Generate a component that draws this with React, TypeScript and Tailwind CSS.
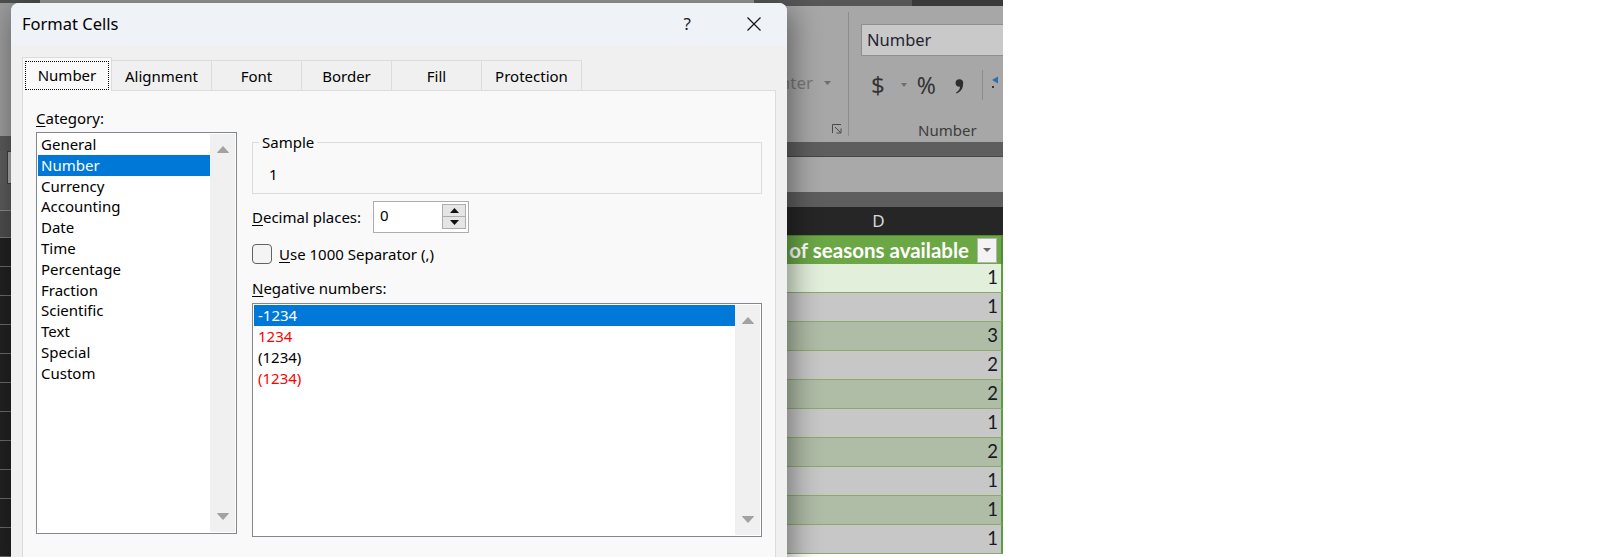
import React from 'react';

const categories = ['General', 'Number', 'Currency', 'Accounting', 'Date', 'Time', 'Percentage', 'Fraction', 'Scientific', 'Text', 'Special', 'Custom'];

const negatives = [
  { label: '-1234', red: false },
  { label: '1234', red: true },
  { label: '(1234)', red: false },
  { label: '(1234)', red: true },
];

const tabs = [
  { label: 'Number', w: 'w-[90px]' },
  { label: 'Alignment', w: 'w-[100px]' },
  { label: 'Font', w: 'w-[90px]' },
  { label: 'Border', w: 'w-[90px]' },
  { label: 'Fill', w: 'w-[90px]' },
  { label: 'Protection', w: 'w-[100px]' },
];

const seasons = [1, 1, 3, 2, 2, 1, 2, 1, 1, 1];

function ScrollArrow({ down }: { down?: boolean }) {
  return (
    <svg width="12" height="7" viewBox="0 0 12 7">
      <polygon points={down ? '0.5,0.5 11.5,0.5 6,6.5' : '0.5,6.5 11.5,6.5 6,0.5'} fill="#a2a2a2" stroke="#a2a2a2" strokeLinejoin="round" />
    </svg>
  );
}

function SpinArrow({ down }: { down?: boolean }) {
  return (
    <svg width="9" height="5" viewBox="0 0 9 5">
      <polygon points={down ? '0,0 9,0 4.5,5' : '0,5 9,5 4.5,0'} fill="#111" />
    </svg>
  );
}

function ScrollBar() {
  return (
    <div className="flex w-[25px] shrink-0 flex-col items-center justify-between bg-[#f0f0f0] py-[12px]">
      <ScrollArrow />
      <ScrollArrow down />
    </div>
  );
}

function LeftStrip() {
  return (
    <div className="flex w-[40px] shrink-0 flex-col">
      <div className="h-[3px] bg-[#4e4e4e]" />
      <div className="h-[139px] bg-[#9b9b9b]" />
      <div className="h-[15px] bg-[#595959]" />
      <div className="flex h-[35px]">
        <div className="w-[7px] bg-[#5c5c5c]" />
        <div className="flex-1 border border-[#3d3d3d] bg-[#a6a6a6]" />
      </div>
      <div className="h-[28px] border-b border-[#8a8a8a] bg-[#5a5a5a]" />
      <div className="h-[28px] border-b border-[#7a7a7a] bg-[#4d4d4d]" />
      {Array.from({ length: 11 }).map((_, i) => (
        <div key={i} className="h-[29px] shrink-0 border-b border-[#6a6a6a] bg-[#212121]" />
      ))}
    </div>
  );
}

function RightColumn() {
  return (
    <div className="flex w-[249px] shrink-0 flex-col font-['Noto_Sans',sans-serif]">
      <div className="flex h-[6px]">
        <div className="w-[158px] bg-[#575757]" />
        <div className="flex-1 bg-[#3a3a3a]" />
      </div>

      {/* ribbon */}
      <div className="flex h-[136px] bg-[#a7a7a7]">
        <div className="flex w-[94px] shrink-0 flex-col">
          <div className="mt-[66px] flex h-[22px] items-center justify-end gap-[11px] pr-[17px]">
            <span className="whitespace-nowrap text-[17px] text-[#777]">Center</span>
            <svg width="7" height="4" viewBox="0 0 7 4">
              <polygon points="0,0 7,0 3.5,4" fill="#6e6e6e" />
            </svg>
          </div>
          <div className="mt-auto flex justify-end pb-[8px] pr-[6px]">
            <svg width="10" height="10" viewBox="0 0 10 10" fill="none" stroke="#4a4a4a" strokeWidth="1">
              <polyline points="0.5,9 0.5,0.5 9,0.5" />
              <line x1="3" y1="3" x2="8.5" y2="8.5" />
              <polyline points="4.5,9 9,9 9,4.5" />
            </svg>
          </div>
        </div>
        <div className="my-[6px] w-px shrink-0 bg-[#8c8c8c]" />
        <div className="flex flex-1 flex-col overflow-hidden pl-[12px] pt-[18px]">
          <div className="flex h-[32px] w-[170px] shrink-0 items-center border border-[#8f8f8f] bg-[#c9c9c9] pl-[5px] text-[16.5px] text-[#1f2433]">
            Number
          </div>
          <div className="mt-[14px] flex h-[30px] items-center text-[#333]">
            <span className="ml-[10px] text-[24px] leading-none">$</span>
            <svg className="ml-[16px]" width="6" height="4" viewBox="0 0 6 4">
              <polygon points="0,0 6,0 3,4" fill="#6e6e6e" />
            </svg>
            <span className="ml-[10px] text-[23px] leading-none">%</span>
            <svg className="ml-[19px] mt-[3px]" width="9" height="15" viewBox="0 0 9 15">
              <circle cx="4.4" cy="4" r="3.8" fill="#2d2d2d" />
              <path d="M8 4.5 C8.3 9 6 12.6 1.6 14.6 L1 13.6 C3.8 11.8 5.2 9.6 5 7.2 Z" fill="#2d2d2d" />
            </svg>
            <div className="ml-[18px] h-[30px] w-px bg-[#8c8c8c]" />
            <svg className="ml-[8px] mb-[6px]" width="8" height="12" viewBox="0 0 8 12">
              <polygon points="1,4 7,0.5 7,7.5" fill="#2f6db3" />
              <rect x="1" y="10" width="2" height="2" fill="#333" />
            </svg>
          </div>
          <div className="mt-[20px] h-[20px] pl-[57px] text-[15px] leading-[20px] text-[#3c3c3c]">Number</div>
        </div>
      </div>

      <div className="h-[15px] border-b border-[#464646] bg-[#5e5e5e]" />
      <div className="h-[35px] bg-[#a9a9a9]" />
      <div className="h-[15px] bg-[#5e5e5e]" />
      <div className="flex h-[28px] items-center justify-center bg-[#262626] text-[17px] text-[#d8d8d8]">D</div>

      {/* table header */}
      <div className="flex h-[29px] shrink-0 items-center justify-end gap-[8px] border-r-2 border-t border-[#4f8a35] bg-[#6ca746] pr-[4px]">
        <span className="whitespace-nowrap font-['Lato',sans-serif] text-[20.5px] font-bold text-white">of seasons available</span>
        <div className="flex h-[25px] w-[20px] shrink-0 items-center justify-center border border-[#b5b5b5] bg-[#f3f3f3]">
          <svg width="8" height="4" viewBox="0 0 8 4">
            <polygon points="0,0 8,0 4,4" fill="#666" />
          </svg>
        </div>
      </div>

      {seasons.map((n, i) => (
        <div
          key={i}
          className={
            'flex h-[29px] shrink-0 items-center justify-end border-b border-r-2 border-b-[#8aab6c] border-r-[#5e9c43] pr-[3px] font-[\'Lato\',sans-serif] text-[18.5px] text-[#151b26] ' +
            (i === 0 ? 'bg-[#e2efda]' : i % 2 === 1 ? 'bg-[#c7c7c7]' : 'bg-[#afbca6]')
          }
        >
          {n}
        </div>
      ))}
    </div>
  );
}

function FormatCellsDialog() {
  return (
    <div className="absolute left-[11px] top-[3px] flex h-[570px] w-[776px] flex-col overflow-hidden rounded-t-[8px] bg-[#f0f0f0] font-['Noto_Sans',sans-serif] text-black shadow-[4px_6px_30px_rgba(0,0,0,0.45)]">
      {/* title bar */}
      <div className="flex h-[42px] shrink-0 items-center bg-[#eff2f6] pl-[11px]">
        <span className="text-[16.5px]">Format Cells</span>
        <span className="ml-auto text-[17px] text-[#222]">?</span>
        <svg className="ml-[56px] mr-[26px]" width="14" height="14" viewBox="0 0 14 14" stroke="#1a1a1a" strokeWidth="1.2">
          <line x1="0.5" y1="0.5" x2="13.5" y2="13.5" />
          <line x1="13.5" y1="0.5" x2="0.5" y2="13.5" />
        </svg>
      </div>

      <div className="flex flex-1 flex-col px-[11px] pt-[12px] text-[15px]">
        {/* tabs */}
        <div className="flex h-[33px] shrink-0 items-end">
          {tabs.map((t, i) =>
            i === 0 ? (
              <div key={t.label} className={`relative z-10 -mb-px flex h-[34px] shrink-0 border border-b-0 border-[#dcdcdc] bg-[#f9f9f9] pb-[1px] pl-[2px] pr-[2px] pt-[3px] ${t.w}`}>
                <div className="flex flex-1 items-center justify-center border border-dotted border-black">{t.label}</div>
              </div>
            ) : (
              <div key={t.label} className={`flex h-[30px] shrink-0 items-center justify-center border-r border-t border-[#dcdcdc] bg-[#f0f0f0] pt-[2px] ${t.w}`}>
                {t.label}
              </div>
            )
          )}
        </div>

        {/* panel */}
        <div className="flex flex-1 border border-[#dcdcdc] bg-[#f9f9f9] pl-[13px] pt-[17px]">
          <div className="flex w-[201px] shrink-0 flex-col">
            <div className="h-[21px] leading-[21px]">
              <span className="underline underline-offset-2">C</span>ategory:
            </div>
            <div className="mt-[3px] flex h-[402px] border border-[#828790] bg-white p-px">
              <div className="flex flex-1 flex-col">
                {categories.map((c) => (
                  <div
                    key={c}
                    className={'h-[20.8px] shrink-0 pl-[3px] leading-[20.8px] ' + (c === 'Number' ? 'bg-[#0078d7] text-white' : '')}
                  >
                    {c}
                  </div>
                ))}
              </div>
              <ScrollBar />
            </div>
          </div>

          <div className="ml-[15px] flex w-[510px] shrink-0 flex-col">
            <fieldset className="mt-[24px] border border-[#dcdcdc]">
              <legend className="ml-[6px] px-[3px] leading-[20px]">Sample</legend>
              <div className="h-[41px] pl-[16px] pt-[12px] leading-[21px]">1</div>
            </fieldset>

            <div className="mt-[7px] flex h-[32px] items-center">
              <div className="w-[121px] shrink-0">
                <span className="underline underline-offset-2">D</span>ecimal places:
              </div>
              <div className="flex h-[32px] w-[96px] items-center border border-[#adadad] bg-white pl-[6px]">
                <span className="mb-[3px]">0</span>
                <div className="ml-auto mr-[2px] flex flex-col self-start pt-[2px]">
                  <div className="flex h-[13px] w-[24px] items-center justify-center border border-[#adadad] bg-[#e5e5e5]">
                    <SpinArrow />
                  </div>
                  <div className="-mt-px flex h-[13px] w-[24px] items-center justify-center border border-[#adadad] bg-[#e5e5e5]">
                    <SpinArrow down />
                  </div>
                </div>
              </div>
            </div>

            <div className="mt-[11px] flex h-[20px] items-center gap-[7px]">
              <div className="h-[20px] w-[20px] shrink-0 rounded-[4px] border border-[#626262] bg-[#f4f4f4]" />
              <span>
                <span className="underline underline-offset-2">U</span>se 1000 Separator (,)
              </span>
            </div>

            <div className="mt-[14px] h-[20px] leading-[20px]">
              <span className="underline underline-offset-2">N</span>egative numbers:
            </div>

            <div className="mt-[5px] flex h-[234px] border border-[#828790] bg-white p-px">
              <div className="flex flex-1 flex-col">
                {negatives.map((n, i) => (
                  <div
                    key={i}
                    className={
                      'h-[21px] shrink-0 pl-[4px] leading-[21px] ' +
                      (i === 0 ? 'bg-[#0078d7] text-white' : n.red ? 'text-[#ff0000]' : 'text-black')
                    }
                  >
                    {n.label}
                  </div>
                ))}
              </div>
              <ScrollBar />
            </div>
          </div>
        </div>
      </div>
    </div>
  );
}

export default function App() {
  return (
    <div className="flex h-[557px] w-[1604px] overflow-hidden bg-white">
      <div className="relative flex h-full w-[1003px] shrink-0 overflow-hidden">
        <LeftStrip />
        <div className="flex-1 bg-[#9a9a9a]" />
        <RightColumn />
        <FormatCellsDialog />
      </div>
      <div className="flex-1 bg-white" />
    </div>
  );
}
